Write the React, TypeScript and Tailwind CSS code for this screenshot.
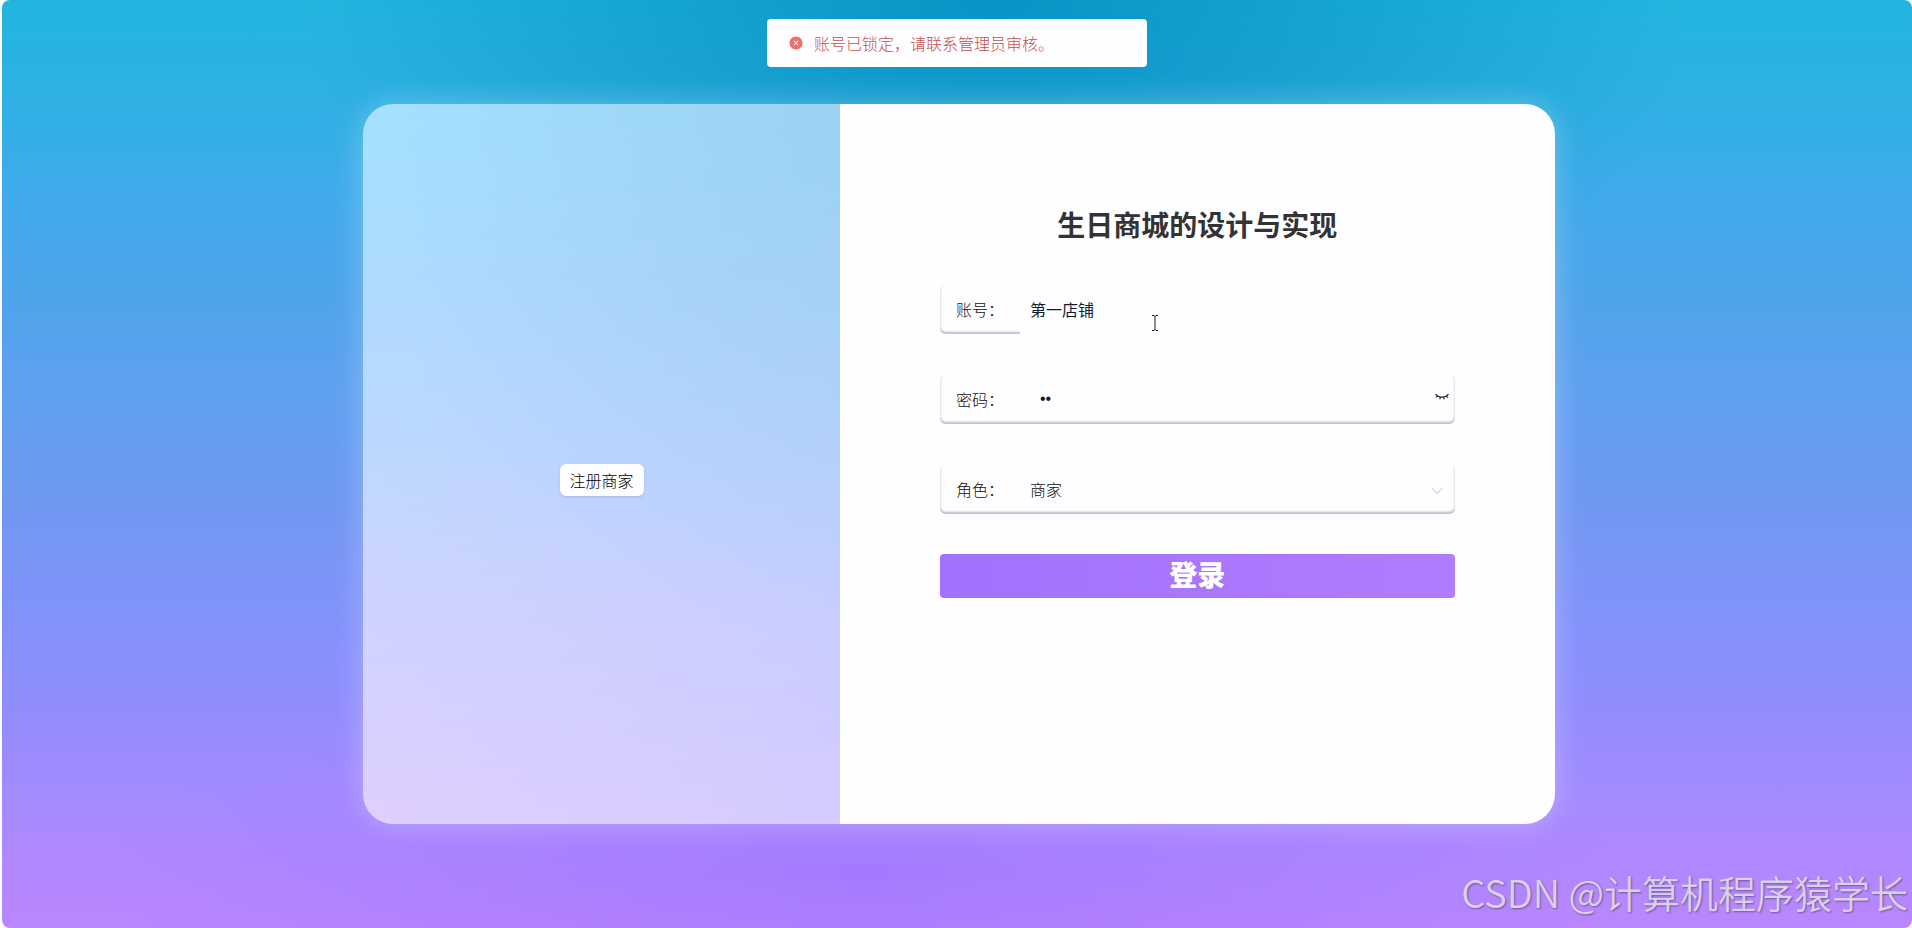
import { FormEvent, useCallback, useState } from 'react';
import { IoIosCloseCircle } from 'react-icons/io';

const rowStyle = "relative flex items-center h-[50px] rounded-md shadow-[inset_0_-3px_2px_-1px_#c4c3c8,inset_0_-1px_3px_#c8c8cc] before:absolute before:inset-x-0 before:top-0 before:h-0.5 before:bg-[#fefdff]"
const labelStyle = "w-20 shrink-0 pl-4 text-base font-light text-[#111]"

const ClosedEye: React.FC<{}> = () => (
  <svg className="h-3.5 w-3.5" viewBox="0 0 14 14" fill="none" stroke="#2b2b33" strokeWidth="1.2">
    <path d="M.5 4.2C3.5 8.2 10.5 8.2 13.5 4.2M2.4 6.1L1 7.6M5.3 7.3L4.8 9.3M8.7 7.3L9.2 9.3M11.6 6.1L13 7.6" />
  </svg>
)

const Toast: React.FC<{ message: string }> = ({ message }) => (
  <div
    role="alert"
    className="absolute left-1/2 top-[19px] flex h-12 w-[380px] -translate-x-1/2 items-center gap-2.5 rounded bg-[#fefdff] px-[21px]"
  >
    <IoIosCloseCircle className="h-4 w-4 text-[#f56c6c]" />
    <p className="text-base font-light text-[#c4504f]">{message}</p>
  </div>
)

const Login: React.FC<{}> = () => {
  const [account, setAccount] = useState('第一店铺')
  const [password, setPassword] = useState('12')
  const [role, setRole] = useState('商家')
  const [visible, setVisible] = useState(false)

  const handleSubmit = useCallback((e: FormEvent) => {
    e.preventDefault()
  }, [])

  return (
    <div className="min-h-screen bg-white pl-0.5 font-['Noto_Sans_CJK_SC',sans-serif]">
      <div className="relative flex min-h-screen items-center justify-center rounded-lg pl-1 bg-[radial-gradient(ellipse_36%_50%_at_52%_0%,#008cbecc,transparent),radial-gradient(ellipse_40%_20%_at_45%_94%,#986fff80,transparent),linear-gradient(to_bottom,#22b6df_0%,#2db1e3_10%,#40abec_21%,#4fa4ea_32%,#60a0f1_43%,#6f98f2_54%,#8093fb_65%,#908dff_76%,#a78aff_87%,#bb86ff_100%)]">
        <div className="flex min-h-[720px] w-5/8 overflow-hidden rounded-[30px] shadow-[0_0_30px_rgba(255,255,255,0.3)]">
          <div className="flex w-[40%] items-center justify-center pt-8 bg-[radial-gradient(ellipse_100%_75%_at_100%_0%,#8ac8dc66,transparent),linear-gradient(to_right,#fff0,#b0b8ff33),linear-gradient(to_bottom,#a4e2ff_0%,#aedcff_25%,#bfd8ff_50%,#cfd3ff_70%,#dfcfff_100%)]">
            <button
              type="button"
              className="h-8 rounded-md bg-[#fefdff] px-2.5 text-base font-light text-black shadow-sm"
            >
              注册商家
            </button>
          </div>

          <div className="flex-1 bg-[#fefdff] pt-[101px]">
            <form className="mx-auto flex w-[72%] flex-col gap-10" onSubmit={handleSubmit}>
              <h1 className="text-center text-[28px] font-bold leading-[39px] text-[#333]">
                生日商城的设计与实现
              </h1>

              <div className={rowStyle}>
                <label htmlFor="account" className={labelStyle}>账号：</label>
                <input
                  id="account"
                  className="h-full min-w-0 flex-1 bg-[#fefdff] pl-2.5 text-base text-[#0f1c2e] outline-none"
                  value={account}
                  onChange={(e) => setAccount(e.target.value)}
                />
              </div>

              <div className={rowStyle}>
                <label htmlFor="password" className={labelStyle}>密码：</label>
                <input
                  id="password"
                  type={visible ? 'text' : 'password'}
                  className="h-full min-w-0 flex-1 bg-transparent pl-5 font-['Liberation_Sans',sans-serif] text-base text-[#0f1c2e] outline-none"
                  value={password}
                  onChange={(e) => setPassword(e.target.value)}
                />
                <button type="button" aria-label="显示密码" className="mr-1.5 pb-1" onClick={() => setVisible(!visible)}>
                  <ClosedEye />
                </button>
              </div>

              <div className={rowStyle}>
                <label htmlFor="role" className={labelStyle}>角色：</label>
                <select
                  id="role"
                  className="h-full min-w-0 flex-1 appearance-none bg-transparent pl-2.5 text-base font-light text-[#111] outline-none"
                  value={role}
                  onChange={(e) => setRole(e.target.value)}
                >
                  <option>商家</option>
                  <option>用户</option>
                  <option>管理员</option>
                </select>
                <svg className="pointer-events-none absolute right-3 top-[21px] h-3 w-3" viewBox="0 0 12 12" fill="none" stroke="#c0c4cc">
                  <path d="M.8 3l5.2 5.4L11.2 3" />
                </svg>
              </div>

              <button
                type="submit"
                className="h-11 rounded bg-linear-to-r from-[#a272fd] to-[#b07cff] pb-1 text-[28px] font-black leading-none text-white"
              >
                登录
              </button>
            </form>
          </div>
        </div>

        <Toast message="账号已锁定，请联系管理员审核。" />

        {/* text cursor */}
        <svg className="pointer-events-none absolute left-[1149px] top-[315px] h-4 w-2" viewBox="0 0 8 16" fill="none" stroke="#1c1c24">
          <path d="M1 .5h2l1 1 1-1h2M4 1v14M1 15.5h2l1-1 1 1h2" />
        </svg>

        <p className="absolute bottom-2 right-1 text-[38px] font-[350] leading-[56px] text-[#dccfee] [text-shadow:1px_1px_2px_#6d5a90]">
          CSDN @计算机程序猿学长
        </p>
      </div>
    </div>
  )
}

export default Login
